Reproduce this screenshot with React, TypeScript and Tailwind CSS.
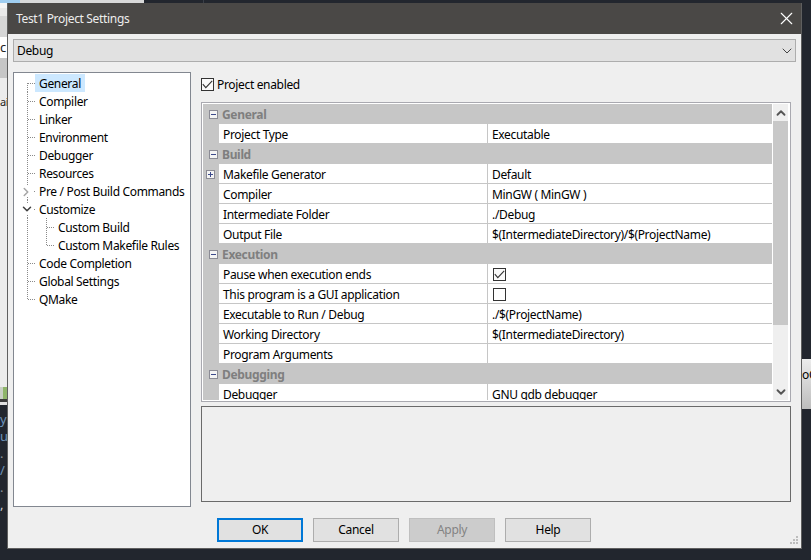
import { X, ChevronDown, ChevronUp, ChevronRight } from 'lucide-react';

// ---------------------------------------------------------------------------
// Data
// ---------------------------------------------------------------------------

type TreeItem = { label: string; level?: 0 | 1; toggle?: 'open' | 'closed'; last?: boolean; lastChild?: boolean };

const TREE: TreeItem[] = [
  { label: 'General' },
  { label: 'Compiler' },
  { label: 'Linker' },
  { label: 'Environment' },
  { label: 'Debugger' },
  { label: 'Resources' },
  { label: 'Pre / Post Build Commands', toggle: 'closed' },
  { label: 'Customize', toggle: 'open' },
  { label: 'Custom Build', level: 1 },
  { label: 'Custom Makefile Rules', level: 1, lastChild: true },
  { label: 'Code Completion' },
  { label: 'Global Settings' },
  { label: 'QMake', last: true },
];

type Row =
  | { group: string }
  | { name: string; value?: string; check?: boolean; expand?: boolean };

const ROWS: Row[] = [
  { group: 'General' },
  { name: 'Project Type', value: 'Executable' },
  { group: 'Build' },
  { name: 'Makefile Generator', value: 'Default', expand: true },
  { name: 'Compiler', value: 'MinGW ( MinGW )' },
  { name: 'Intermediate Folder', value: './Debug' },
  { name: 'Output File', value: '$(IntermediateDirectory)/$(ProjectName)' },
  { group: 'Execution' },
  { name: 'Pause when execution ends', check: true },
  { name: 'This program is a GUI application', check: false },
  { name: 'Executable to Run / Debug', value: './$(ProjectName)' },
  { name: 'Working Directory', value: '$(IntermediateDirectory)' },
  { name: 'Program Arguments', value: '' },
  { group: 'Debugging' },
  { name: 'Debugger', value: 'GNU gdb debugger' },
];

const BUTTONS = ['OK', 'Cancel', 'Apply', 'Help'];

// ---------------------------------------------------------------------------
// Small parts
// ---------------------------------------------------------------------------

function TreeGuide({ item, first }: { item: TreeItem; first: boolean }) {
  const top = first ? 9 : 0;
  const bottom = item.last ? 9 : 18;
  return (
    <svg width="21" height="18" className="shrink-0 block" stroke="#8a8a8a" fill="none" strokeDasharray="1 1">
      {!item.toggle && <line x1="13.5" y1={top} x2="13.5" y2={bottom} />}
      {item.toggle && <line x1="13.5" y1="0" x2="13.5" y2="3" />}
      {item.toggle && <line x1="13.5" y1="15" x2="13.5" y2="18" />}
      {item.toggle ? (
        <line x1="20" y1="9.5" x2="21" y2="9.5" />
      ) : (
        !item.level && <line x1="14" y1="9.5" x2="21" y2="9.5" />
      )}
    </svg>
  );
}

function ChildGuide({ last }: { last?: boolean }) {
  return (
    <svg width="19" height="18" className="shrink-0 block" stroke="#8a8a8a" fill="none" strokeDasharray="1 1">
      <line x1="11.5" y1="0" x2="11.5" y2={last ? 9 : 18} />
      <line x1="12" y1="9.5" x2="19" y2="9.5" />
    </svg>
  );
}

function TreeRow({ item, index }: { item: TreeItem; index: number }) {
  return (
    <div className="relative flex h-[18px] items-center">
      <TreeGuide item={item} first={index === 0} />
      {item.level === 1 && <ChildGuide last={item.lastChild} />}
      {item.toggle === 'closed' && (
        <ChevronRight size={14} strokeWidth={2.6} className="absolute left-[5px] top-[3px] text-[#a6a6a6]" />
      )}
      {item.toggle === 'open' && (
        <ChevronDown size={14} strokeWidth={2.6} className="absolute left-[6px] top-[2px] text-[#404040]" />
      )}
      <span className={`flex h-[18px] items-center whitespace-nowrap px-[4px] pt-px ${index === 0 ? 'bg-[#cce8ff]' : ''}`}>
        {item.label}
      </span>
    </div>
  );
}

function Checkmark({ size }: { size: number }) {
  return (
    <span
      className="flex shrink-0 items-center justify-center border border-[#333333] bg-[#fafafa]"
      style={{ width: size, height: size }}
    >
      <svg width="11" height="9" viewBox="0 0 11 9" fill="none" stroke="#333333" strokeWidth="1.1">
        <path d="M0.8 4.2 L3.8 7.6 L10.2 0.8" />
      </svg>
    </span>
  );
}

function Expander({ sign }: { sign: 'plus' | 'minus' }) {
  return (
    <span className="flex h-[9px] w-[9px] items-center justify-center border border-[#8b8b95] bg-[#f4f4f4]">
      <svg width="7" height="7" stroke="#3c4a8c" strokeWidth="1">
        <line x1="1" y1="3.5" x2="6" y2="3.5" />
        {sign === 'plus' && <line x1="3.5" y1="1" x2="3.5" y2="6" />}
      </svg>
    </span>
  );
}

function GridRow({ row }: { row: Row }) {
  if ('group' in row) {
    return (
      <div className="flex h-[20px] shrink-0 items-center bg-[#c6c6c6]">
        <span className="flex w-[19px] justify-center pl-[1px]">
          <Expander sign="minus" />
        </span>
        <span className="pt-px font-bold text-[#7f7f7f]">{row.group}</span>
      </div>
    );
  }
  return (
    <div className="flex h-[20px] shrink-0 bg-[#c6c6c6]">
      <span className="flex w-[16px] items-center justify-center pr-[1px]">
        {row.expand && <Expander sign="plus" />}
      </span>
      <div className="flex w-[268px] items-center border-b border-[#c6c6c6] bg-white pl-[4px] pt-[2px]">{row.name}</div>
      <div className="ml-[1px] flex flex-1 items-center border-b border-[#c6c6c6] bg-white pl-[4px] pt-[2px]">
        {row.check === true && (
          <span className="ml-px">
            <Checkmark size={13} />
          </span>
        )}
        {row.check === false && <span className="ml-px block h-[13px] w-[13px] border border-[#333333] bg-white" />}
        {row.value}
      </div>
    </div>
  );
}

// ---------------------------------------------------------------------------
// Page
// ---------------------------------------------------------------------------

export default function App() {
  return (
    <div className="relative h-[560px] w-[811px] overflow-hidden bg-[#22262e] font-['Noto_Sans',sans-serif] text-[12px] tracking-[-0.33px] text-black">
      {/* IDE window behind the dialog: only slivers of it show */}
      <div className="absolute left-0 top-0 flex h-[3px] w-[203px]">
        <div className="w-[20px] bg-[#9fcdf0]" />
        <div className="w-[124px] bg-[#d9d9d9]" />
      </div>
      <div className="absolute left-[203px] top-0 h-[3px] w-px bg-[#3a3f48]" />
      <div className="absolute left-0 top-[3px] flex h-[399px] w-[7px] flex-col bg-[#ececec] text-[#222222]">
        <div className="h-[5px] bg-[#f5f5f5]" />
        <div className="h-[8px] bg-[#e9e9e9]" />
        <div className="h-[21px] bg-[#d6d6d6]" />
        <div className="flex h-[21px] items-center overflow-hidden bg-white text-[13px]">c</div>
        <div className="h-[20px] bg-[#c6c6c6]" />
        <div className="flex h-[44px] items-end overflow-hidden bg-[#ececec] pb-[12px] text-[11px] leading-[16px]">ai</div>
        <div className="flex-1 bg-[#ececec]" />
        <div className="flex h-[12px] bg-[#c9cfc4]">
          <div className="ml-[3px] w-[4px] bg-[#8fb56a]" />
        </div>
        <div className="h-[3px] bg-[#3a3a3a]" />
      </div>
      <div className="absolute left-0 top-[402px] h-[3px] w-[7px] bg-[#e0e0e0]" />
      <div className="absolute left-0 top-[411px] flex w-[7px] flex-col overflow-hidden text-[13px] leading-[17px] text-[#6f93b8]">
        <span>y</span>
        <span>u</span>
        <span className="text-[#8a8f98]">.</span>
        <span>/</span>
        <span className="text-[#8a8f98]">.</span>
        <span className="text-[#c8ccd2]">,</span>
      </div>
      <div className="absolute left-[802px] top-[359px] flex h-[50px] w-[9px] items-start overflow-hidden bg-gradient-to-b from-[#ececec] to-[#bdbdbd] pt-[9px] leading-[14px]">
        oC
      </div>

      {/* Project settings dialog */}
      <div className="absolute left-[7px] top-[3px] flex h-[546px] w-[795px] flex-col border border-t-0 border-[#5f5f5f] bg-[#efefef]">
        <div className="flex h-[31px] shrink-0 items-center justify-between bg-[#4a4846] pl-[8px] pr-[4px] text-[#ededed]">
          <span>Test1 Project Settings</span>
          <X size={21} strokeWidth={1.3} className="text-white" />
        </div>

        <div className="flex min-h-0 flex-1 flex-col px-[5px] pb-[6px] pt-[5px]">
          <div className="flex h-[23px] shrink-0 items-center justify-between border border-[#adadad] bg-[#e1e1e1] pl-[3px]">
            <span>Debug</span>
            <ChevronDown size={16} strokeWidth={1.5} className="text-[#444444]" />
          </div>

          <div className="mt-[10px] flex min-h-0 flex-1 gap-[10px]">
            <div className="h-[435px] w-[178px] shrink-0 border border-[#828790] bg-white pt-px">
              {TREE.map((item, i) => (
                <TreeRow key={item.label} item={item} index={i} />
              ))}
            </div>

            <div className="flex w-[590px] flex-col">
              <label className="mt-[6px] flex h-[13px] items-center gap-[3px]">
                <Checkmark size={13} />
                <span className="pt-px">Project enabled</span>
              </label>

              <div className="mt-[11px] flex h-[300px] shrink-0 overflow-hidden border border-[#a9a9b0] bg-white py-px pl-px pr-[2px]">
                <div className="flex min-w-0 flex-1 flex-col overflow-hidden">
                  {ROWS.map((row, i) => (
                    <GridRow key={i} row={row} />
                  ))}
                </div>
                <div className="ml-px flex w-[15px] shrink-0 flex-col items-center bg-[#efefef]">
                  <div className="flex h-[17px] w-full shrink-0 items-center justify-center">
                    <ChevronUp size={14} strokeWidth={3.2} className="text-[#555555]" />
                  </div>
                  <div className="h-[204px] w-full bg-[#c8c8c8]" />
                  <div className="flex-1" />
                  <div className="flex h-[17px] w-full shrink-0 items-center justify-center">
                    <ChevronDown size={14} strokeWidth={3.2} className="text-[#555555]" />
                  </div>
                </div>
              </div>

              <div className="mt-[4px] h-[96px] shrink-0 border border-[#6a6a6a] bg-[#efefef]" />
            </div>
          </div>

          <div className="ml-[204px] flex shrink-0 gap-[10px]">
            {BUTTONS.map((b) => (
              <button
                key={b}
                className={
                  b === 'OK'
                    ? 'h-[24px] w-[86px] border-2 border-[#0078d7] bg-[#e1e1e1]'
                    : b === 'Apply'
                    ? 'h-[24px] w-[86px] border border-[#bfbfbf] bg-[#cccccc] text-[#838383]'
                    : 'h-[24px] w-[86px] border border-[#adadad] bg-[#e1e1e1]'
                }
              >
                {b}
              </button>
            ))}
          </div>
        </div>

        {/* Size grip */}
        <svg width="9" height="10" className="absolute bottom-[2px] right-[2px]" fill="#bdbdbd">
          <rect x="6" y="0" width="2" height="2" />
          <rect x="3" y="3" width="2" height="2" />
          <rect x="6" y="3" width="2" height="2" />
          <rect x="0" y="6" width="2" height="2" />
          <rect x="3" y="6" width="2" height="2" />
          <rect x="6" y="6" width="2" height="2" />
        </svg>
      </div>
    </div>
  );
}
